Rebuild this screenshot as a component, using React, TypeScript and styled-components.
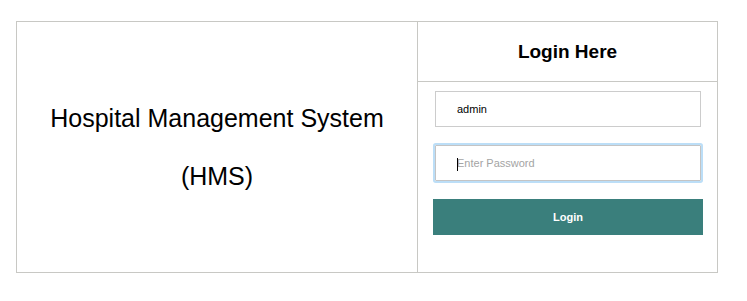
import React from "react";
import styled, { createGlobalStyle } from "styled-components";

const Global = createGlobalStyle`
  html, body { margin: 0; padding: 0; background: #fff; }
  body { font-family: "Liberation Sans", Arial, Helvetica, sans-serif; color: #000; }
  * { box-sizing: border-box; }
`;

const Frame = styled.div`
  margin: 21px 0 0 16px;
  width: 702px;
  height: 252px;
  border: 1px solid #c8c8c4;
  display: flex;
`;

const Brand = styled.section`
  width: 401px;
  border-right: 1px solid #c8c8c4;
  display: flex;
  flex-direction: column;
  align-items: center;
  justify-content: center;
  gap: 29px;
`;

const BrandLine = styled.div`
  font-size: 25px;
  line-height: 29px;
  white-space: nowrap;
`;

const LoginPanel = styled.section`
  flex: 1;
  display: flex;
  flex-direction: column;
`;

const Header = styled.header`
  height: 60px;
  border-bottom: 1px solid #c8c8c4;
  display: flex;
  align-items: center;
  justify-content: center;
`;

const Title = styled.h3`
  margin: 0;
  font-size: 19px;
  font-weight: bold;
`;

const Form = styled.form`
  width: 270px;
  margin: 9px 0 0 15px;
  display: flex;
  flex-direction: column;
`;

const Field = styled.div<{ $focused?: boolean }>`
  position: relative;
  margin: 0 2px;
  height: 36px;
  border: 1px solid ${(p) => (p.$focused ? "#c4c4c4" : "#cccccc")};
  border-radius: ${(p) => (p.$focused ? "1px" : "0")};
  box-shadow: ${(p) => (p.$focused ? "0 0 0 2px #bcdef7" : "none")};
  & + & {
    margin-top: 18px;
  }
`;

const Input = styled.input`
  width: 100%;
  height: 100%;
  border: none;
  outline: none;
  background: transparent;
  padding: 0 0 0 21px;
  font-family: "Liberation Sans", Arial, sans-serif;
  font-size: 11px;
  color: #000;
  &::placeholder {
    color: #a4a4a4;
  }
`;

const Caret = styled.span`
  position: absolute;
  left: 21px;
  top: 12px;
  width: 1px;
  height: 13px;
  background: #000;
`;

const Button = styled.button`
  margin-top: 18px;
  height: 36px;
  width: 100%;
  border: none;
  background: #3a7f7c;
  color: #fff;
  font-family: "Liberation Sans", Arial, sans-serif;
  font-size: 11px;
  font-weight: bold;
  cursor: pointer;
`;

export default function App() {
  return (
    <>
      <Global />
      <Frame>
        <Brand>
          <BrandLine>Hospital Management System</BrandLine>
          <BrandLine>(HMS)</BrandLine>
        </Brand>
        <LoginPanel>
          <Header>
            <Title>Login Here</Title>
          </Header>
          <Form onSubmit={(e) => e.preventDefault()}>
            <Field>
              <Input type="text" defaultValue="admin" />
            </Field>
            <Field $focused>
              <Input type="password" placeholder="Enter Password" />
              <Caret />
            </Field>
            <Button type="submit">Login</Button>
          </Form>
        </LoginPanel>
      </Frame>
    </>
  );
}
